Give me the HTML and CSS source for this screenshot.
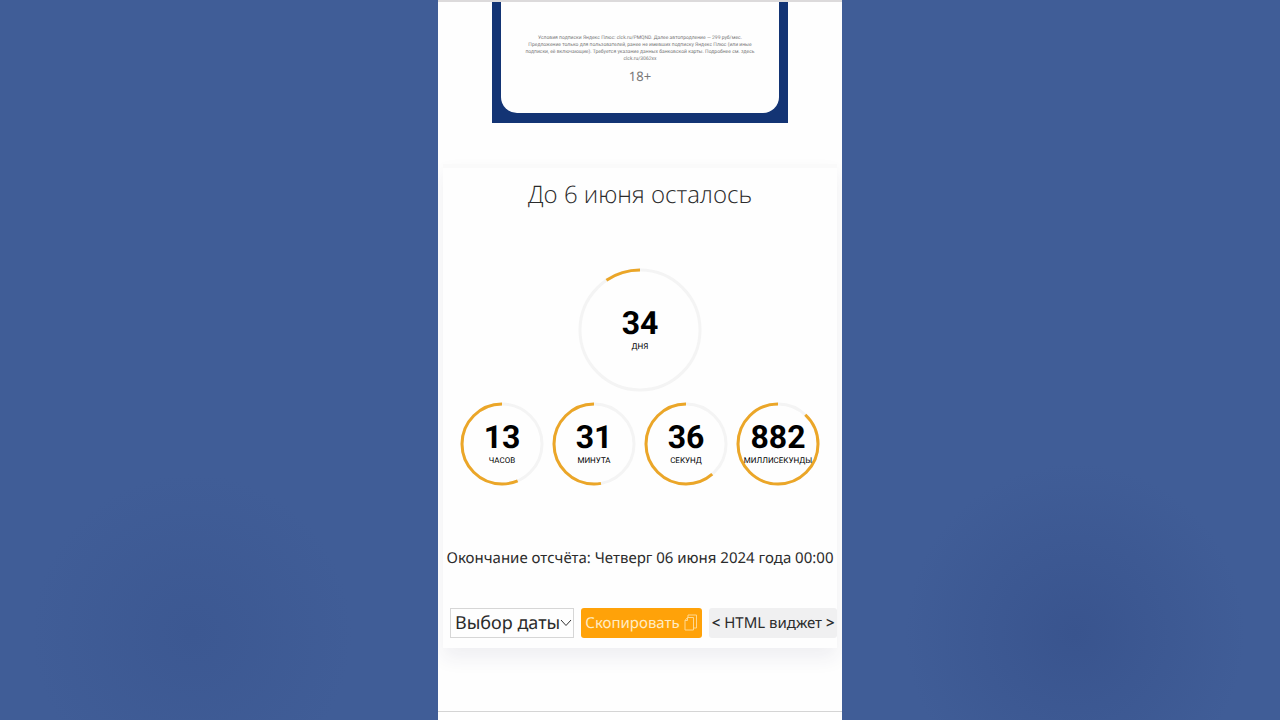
FILE: index.html
```html
<!DOCTYPE html>
<html lang="ru">
<head>
<meta charset="utf-8">
<meta name="viewport" content="width=device-width, initial-scale=1">
<title>До 6 июня осталось</title>
<link rel="stylesheet" href="styles.css">
</head>
<body>
<div class="screen">
  <main class="content">
    <aside class="promo">
      <div class="promo-card">
        <p class="promo-terms">Условия подписки Яндекс Плюс: clck.ru/PMQND. Далее автопродление — 299 руб/мес.<br>Предложение только для пользователей, ранее не имевших подписку Яндекс Плюс (или иные<br>подписки, её включающие). Требуется указание данных банковской карты. Подробнее см. здесь<br>clck.ru/3062xx</p>
        <p class="promo-age">18+</p>
      </div>
    </aside>
    <section class="card">
      <h1 class="title">До 6 июня осталось</h1>
      <div class="timer">
        <div class="dial dial-large">
          <svg class="ring" viewBox="0 0 124 124" aria-hidden="true">
            <circle class="track" cx="62" cy="62" r="60"/>
            <path class="arc" pathLength="360" stroke-dasharray="34 360" d="M62 2A60 60 0 0 0 62 122A60 60 0 0 0 62 2"/>
          </svg>
          <div class="readout"><span class="value">34</span><span class="unit">ДНЯ</span></div>
        </div>
        <div class="dials">
          <div class="dial">
            <svg class="ring" viewBox="0 0 84 84" aria-hidden="true">
              <circle class="track" cx="42" cy="42" r="40"/>
              <path class="arc" pathLength="360" stroke-dasharray="203 360" d="M42 2A40 40 0 0 0 42 82A40 40 0 0 0 42 2"/>
            </svg>
            <div class="readout"><span class="value">13</span><span class="unit">ЧАСОВ</span></div>
          </div>
          <div class="dial">
            <svg class="ring" viewBox="0 0 84 84" aria-hidden="true">
              <circle class="track" cx="42" cy="42" r="40"/>
              <path class="arc" pathLength="360" stroke-dasharray="190 360" d="M42 2A40 40 0 0 0 42 82A40 40 0 0 0 42 2"/>
            </svg>
            <div class="readout"><span class="value">31</span><span class="unit">МИНУТА</span></div>
          </div>
          <div class="dial">
            <svg class="ring" viewBox="0 0 84 84" aria-hidden="true">
              <circle class="track" cx="42" cy="42" r="40"/>
              <path class="arc" pathLength="360" stroke-dasharray="221 360" d="M42 2A40 40 0 0 0 42 82A40 40 0 0 0 42 2"/>
            </svg>
            <div class="readout"><span class="value">36</span><span class="unit">СЕКУНД</span></div>
          </div>
          <div class="dial">
            <svg class="ring" viewBox="0 0 84 84" aria-hidden="true">
              <circle class="track" cx="42" cy="42" r="40"/>
              <path class="arc" pathLength="360" stroke-dasharray="317 360" d="M42 2A40 40 0 0 0 42 82A40 40 0 0 0 42 2"/>
            </svg>
            <div class="readout"><span class="value">882</span><span class="unit">МИЛЛИСЕКУНДЫ</span></div>
          </div>
        </div>
      </div>
      <p class="deadline">Окончание отсчёта: Четверг 06 июня 2024 года 00:00</p>
      <div class="actions">
        <div class="picker">
          <select class="select" aria-label="Выбор даты"><option>Выбор даты</option></select>
          <svg class="chevron" viewBox="0 0 12 8" aria-hidden="true"><path d="M1 1L6 6.500L11 1"/></svg>
        </div>
        <button class="btn btn-copy" type="button">Скопировать
          <svg class="copy-icon" viewBox="0 0 14 18" aria-hidden="true"><path d="M4 3.500V1H12.500V14H9.500M3.500 3.500H9.500V16H1V6.500L3.500 3.500V6.500H1"/></svg>
        </button>
        <button class="btn btn-widget" type="button"><b class="angle">&lt;</b> HTML виджет <b class="angle">&gt;</b></button>
      </div>
    </section>
  </main>
  <footer class="bottom-bar"></footer>
</div>
</body>
</html>
```
FILE: styles.css
```css
* { box-sizing: border-box; }

body {
  margin: 0;
  min-height: 100vh;
  display: flex;
  justify-content: center;
  background:
    radial-gradient(circle at 15% 88%, #3c5892 0, transparent 160px),
    radial-gradient(circle at 84% 88%, #39548e 0, transparent 170px),
    #405d97;
  font-family: "Noto Sans", "Open Sans", sans-serif;
  color: #2b2b2b;
  text-rendering: geometricPrecision;
}

p, h1 { margin: 0; }

.screen {
  width: 100%;
  max-width: 404px;
  min-height: 100vh;
  display: flex;
  flex-direction: column;
  background: #fefefe;
  border-top: 2px solid #dcdadb;
  overflow: hidden;
}

.content {
  flex: 1;
  padding: 0 5px;
}

.promo {
  max-width: 296px;
  margin: 0 auto;
  padding: 0 9px 10px;
  background: #133474;
}

.promo-card {
  padding: 33px 0 28px;
  border-radius: 0 0 16px 16px;
  background: #fefefe;
  color: #777;
  text-align: center;
}

.promo-terms {
  font-family: Roboto, sans-serif;
  font-size: 5px;
  line-height: 7px;
  white-space: nowrap;
}

.promo-age {
  margin-top: 4px;
  font-size: 13px;
  line-height: 18px;
}

.card {
  margin-top: 41px;
  padding: 10px 0;
  border-top: 4px solid #fafafa;
  background: #fefefe;
  box-shadow: 0 10px 18px rgba(40, 40, 80, 0.07);
}

.title {
  font-family: "Open Sans", "Noto Sans", sans-serif;
  font-size: 24px;
  font-weight: 300;
  line-height: 34px;
  text-align: center;
}

.timer {
  display: flex;
  flex-direction: column;
  align-items: center;
  gap: 10px;
  margin-top: 56px;
}

.dials {
  display: flex;
  gap: 8px;
}

.dial {
  display: grid;
  place-items: center;
  width: 84px;
  height: 84px;
  font-family: Roboto, sans-serif;
  color: #000;
}

.dial-large {
  width: 124px;
  height: 124px;
}

.ring {
  grid-area: 1 / 1;
  width: 100%;
  height: 100%;
}

.readout {
  grid-area: 1 / 1;
  display: flex;
  flex-direction: column;
  align-items: center;
  gap: 7px;
  padding-top: 2px;
}

.track {
  fill: none;
  stroke: #f4f4f4;
  stroke-width: 3;
}

.arc {
  fill: none;
  stroke: #eba628;
  stroke-width: 3;
}

.value {
  font-size: 32px;
  font-weight: 700;
  line-height: 24px;
}

.unit {
  font-size: 8px;
  line-height: 10px;
}

.deadline {
  margin-top: 61px;
  font-size: 15px;
  line-height: 22px;
  text-align: center;
  white-space: nowrap;
}

.actions {
  display: grid;
  grid-template-columns: 124fr 122fr 128fr;
  gap: 7px;
  margin-top: 39px;
  padding-left: 7px;
}

.picker {
  display: grid;
  align-items: center;
}

.select {
  grid-area: 1 / 1;
  appearance: none;
  width: 100%;
  height: 30px;
  padding: 0 0 0 4px;
  border: 1px solid #d6d6d6;
  border-radius: 0;
  background: #fefefe;
  color: #2b2b2b;
  font: 18px/24px "Noto Sans", "Open Sans", sans-serif;
  text-rendering: inherit;
}

.chevron {
  grid-area: 1 / 1;
  justify-self: end;
  width: 12px;
  height: 8px;
  margin-right: 2px;
  pointer-events: none;
  fill: none;
  stroke: #333;
  stroke-width: 1;
}

.btn {
  display: flex;
  align-items: center;
  justify-content: center;
  gap: 4px;
  height: 30px;
  padding: 0;
  border: 0;
  border-radius: 3px;
  font: 15px/20px "Noto Sans", "Open Sans", sans-serif;
  text-rendering: inherit;
  white-space: nowrap;
}

.btn-copy {
  background: #ffa209;
  color: #ffecc4;
}

.btn-widget {
  background: #f0f0f1;
  color: #2b2b2b;
}

.angle { font-weight: 600; }

.copy-icon {
  width: 14px;
  height: 18px;
  fill: none;
  stroke: #ffd890;
  stroke-width: 1;
}

.bottom-bar {
  height: 9px;
  border-top: 1px solid #d4d4d4;
}
```
